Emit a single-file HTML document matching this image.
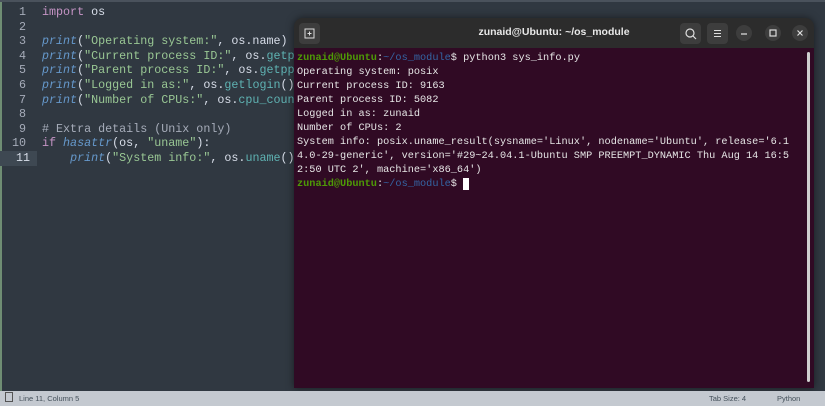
<!DOCTYPE html>
<html><head><style>
html,body{margin:0;padding:0;width:825px;height:406px;overflow:hidden;background:#303841;font-family:"Liberation Sans",sans-serif}
.top{position:absolute;left:0;top:0;width:825px;height:2px;background:#4a525c}
.gedge{position:absolute;left:0;top:2px;width:2px;height:389px;background:#99c794;opacity:.6}
.code{position:absolute;left:0;top:5px;font-family:"Liberation Mono",monospace;font-size:11.7px;line-height:14.6px;color:#d8dee9;white-space:pre}
.ln{display:inline-block;width:26px;text-align:right;color:#a6acb9;margin-right:16px}
.cur{background:#3e4852;width:37px;display:inline-block;text-align:right;padding-right:0}
.k{color:#c594c5}.f{color:#6699cc;font-style:italic}.s{color:#99c794}.c{color:#a6acb9}.m{color:#5fb3b3}
.win{position:absolute;left:294px;top:18px;width:520px;height:370px;background:#2c2c2c;border-radius:9px 9px 0 0;box-shadow:0 0 8px rgba(0,0,0,.5);overflow:hidden}
.hdr{height:30px;background:#2c2c2c;position:relative}
.title{position:absolute;left:0;right:0;top:8px;text-align:center;color:#e8e8e8;font-size:10.5px;font-weight:bold}
.btn{position:absolute;top:5px;width:21px;height:21px;border-radius:4px;background:#3d3d3d}
.cb{position:absolute;top:7px;width:16px;height:16px;border-radius:50%;background:#3d3d3d}
.body{position:absolute;left:0;top:30px;width:520px;height:340px;background:#300a24}
.term{position:absolute;left:3px;top:3px;font-family:"Liberation Mono",monospace;font-size:10.25px;line-height:14px;color:#e6e6e6;white-space:pre}
.g{color:#4e9a06;font-weight:bold}.b{color:#3465a4}
.sb{position:absolute;right:4px;top:4px;width:3px;height:330px;background:#cfcfcf;border-radius:2px}
.status{position:absolute;left:0;top:391px;width:825px;height:15px;background:#c4c9d0;font-size:7.5px;color:#44505a;line-height:15px}
</style></head><body>
<div class="top"></div>
<div class="gedge"></div>
<div class="code"><span class="ln">1</span><span class="k">import</span> os
<span class="ln">2</span>
<span class="ln">3</span><span class="f">print</span>(<span class="s">"Operating system:"</span>, os.name)
<span class="ln">4</span><span class="f">print</span>(<span class="s">"Current process ID:"</span>, os.<span class="m">getpid</span>())
<span class="ln">5</span><span class="f">print</span>(<span class="s">"Parent process ID:"</span>, os.<span class="m">getppid</span>())
<span class="ln">6</span><span class="f">print</span>(<span class="s">"Logged in as:"</span>, os.<span class="m">getlogin</span>())
<span class="ln">7</span><span class="f">print</span>(<span class="s">"Number of CPUs:"</span>, os.<span class="m">cpu_count</span>())
<span class="ln">8</span>
<span class="ln">9</span><span class="c"># Extra details (Unix only)</span>
<span class="ln">10</span><span class="k">if</span> <span class="f">hasattr</span>(os, <span class="s">"uname"</span>):
<span class="ln cur" style="margin-right:5px;color:#d8dee9">11 </span>    <span class="f">print</span>(<span class="s">"System info:"</span>, os.<span class="m">uname</span>())</div>
<div class="win">
 <div class="hdr">
  <div class="btn" style="left:5px"><svg width="21" height="21"><rect x="6" y="6" width="9" height="9" fill="none" stroke="#ddd" stroke-width="1"/><path d="M10.5 8.5v4M8.5 10.5h4" stroke="#ddd"/></svg></div>
  <div class="title">zunaid@Ubuntu: ~/os_module</div>
  <div class="btn" style="left:386px"><svg width="21" height="21"><circle cx="10" cy="10" r="4" fill="none" stroke="#ddd" stroke-width="1.2"/><path d="M13 13l3 3" stroke="#ddd" stroke-width="1.2"/></svg></div>
  <div class="btn" style="left:413px"><svg width="21" height="21"><path d="M7 7.5h7M7 10.5h7M7 13.5h7" stroke="#ddd" stroke-width="1.1"/></svg></div>
  <div class="cb" style="left:442px"><svg width="16" height="16"><path d="M5 9h6" stroke="#ddd" stroke-width="1.2"/></svg></div>
  <div class="cb" style="left:471px"><svg width="16" height="16"><rect x="5" y="5" width="6" height="6" fill="none" stroke="#ddd" stroke-width="1.2"/></svg></div>
  <div class="cb" style="left:498px"><svg width="16" height="16"><path d="M5.5 5.5l5 5M10.5 5.5l-5 5" stroke="#ddd" stroke-width="1.2"/></svg></div>
 </div>
 <div class="body">
<div class="term"><span class="g">zunaid@Ubuntu</span>:<span class="b">~/os_module</span>$ python3 sys_info.py
Operating system: posix
Current process ID: 9163
Parent process ID: 5082
Logged in as: zunaid
Number of CPUs: 2
System info: posix.uname_result(sysname='Linux', nodename='Ubuntu', release='6.1
4.0-29-generic', version='#29~24.04.1-Ubuntu SMP PREEMPT_DYNAMIC Thu Aug 14 16:5
2:50 UTC 2', machine='x86_64')
<span class="g">zunaid@Ubuntu</span>:<span class="b">~/os_module</span>$ <span style="background:#fff">&nbsp;</span></div>
<div class="sb"></div>
 </div>
</div>
<div class="status"><span style="display:inline-block;width:6px;height:8px;border:1px solid #555;margin:0 6px 0 5px;vertical-align:-1px"></span>Line 11, Column 5<span style="position:absolute;left:709px">Tab Size: 4</span><span style="position:absolute;left:777px">Python</span></div>
</body></html>
